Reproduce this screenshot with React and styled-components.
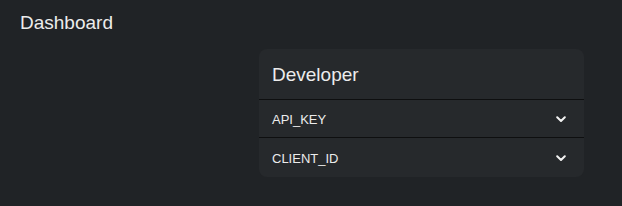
import React from "react";
import styled, { createGlobalStyle } from "styled-components";

const GlobalStyle = createGlobalStyle`
  html, body {
    margin: 0;
    padding: 0;
    background: #202326;
    font-family: "Liberation Sans", Arial, sans-serif;
    color: #ececec;
  }
`;

const Page = styled.div`
  min-height: 206px;
`;

const Title = styled.h1`
  margin: 0;
  padding: 12px 20px 10px;
  font-size: 19px;
  line-height: 22px;
  font-weight: 400;
`;

const Layout = styled.div`
  display: grid;
  grid-template-columns: 221px 1fr;
  padding-top: 5px;
`;

const Main = styled.main`
  display: flex;
  justify-content: center;
`;

const Card = styled.section`
  width: 325px;
  background: #26292c;
  border-radius: 8px;
  overflow: hidden;
`;

const CardHeader = styled.h2`
  margin: 0;
  height: 50px;
  box-sizing: border-box;
  display: flex;
  align-items: center;
  padding: 2px 13px 0;
  font-size: 19px;
  font-weight: 400;
  border-bottom: 1px solid #0e0f10;
  box-sizing: content-box;
  height: 48px;
`;

const Row = styled.div`
  height: ${({ $h }) => $h}px;
  display: flex;
  align-items: center;
  justify-content: space-between;
  padding: 1px 18px 0 13px;
  font-size: 13px;
  border-bottom: ${({ $last }) => ($last ? "none" : "1px solid #0e0f10")};
`;

const Chevron = () => (
  <svg width="10" height="7" viewBox="0 0 10 7">
    <polyline
      points="1.2,1.2 5,5 8.8,1.2"
      fill="none"
      stroke="#f2f2f2"
      strokeWidth="2"
      strokeLinecap="round"
      strokeLinejoin="round"
    />
  </svg>
);

function App() {
  return (
    <Page>
      <GlobalStyle />
      <Title>Dashboard</Title>
      <Layout>
        <div />
        <Main>
          <Card>
            <CardHeader>Developer</CardHeader>
            <Row $h={36}>
              <span>API_KEY</span>
              <Chevron />
            </Row>
            <Row $h={38} $last>
              <span>CLIENT_ID</span>
              <Chevron />
            </Row>
          </Card>
        </Main>
      </Layout>
    </Page>
  );
}

export default App;
